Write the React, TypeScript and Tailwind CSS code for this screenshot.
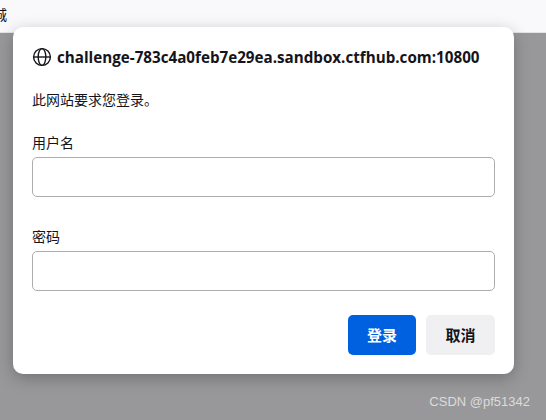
import React from 'react';

const cjk = { fontFamily: '"Open Sans", "Noto Sans CJK SC", sans-serif' };

const GlobeIcon = () => (
  <svg width="20" height="20" viewBox="0 0 20 20" fill="none" stroke="#15141a" strokeWidth="1.4">
    <circle cx="10" cy="10" r="8.4" />
    <ellipse cx="10" cy="10" rx="3.8" ry="8.4" />
    <path d="M1.6 10h16.8" />
  </svg>
);

const Field = ({ label }: { label: string }) => (
  <div className="flex flex-col">
    <label className="text-[14px] leading-[20px] text-[#15141a] mb-[4px]">{label}</label>
    <input
      type="text"
      className="w-full h-[40px] rounded-[5px] border border-[#adadaf] bg-white outline-none"
    />
  </div>
);

export default function App() {
  return (
    <div className="relative w-[546px] h-[420px] overflow-hidden bg-[#98989a]" style={cjk}>
      {/* Tab bar behind the dialog */}
      <div className="h-[33px] bg-[#f9f9fb] border-b border-[#e4e4e6] text-[14px] leading-[30px] text-[#15141a] -ml-[7px]">
        城
      </div>

      {/* Dialog */}
      <div className="absolute left-[13px] top-[27px] w-[501px] h-[347px] bg-white rounded-[10px] shadow-[0_4px_16px_rgba(0,0,0,0.25)] px-[19px] pt-[20px] pb-[19px] flex flex-col">
        <div className="flex items-center gap-[5px] h-[20px]">
          <GlobeIcon />
          <span className="text-[15.2px] font-bold leading-[20px] text-[#15141a] whitespace-nowrap">
            challenge-783c4a0feb7e29ea.sandbox.ctfhub.com:10800
          </span>
        </div>
        <p className="mt-[23px] text-[14px] leading-[20px] text-[#15141a]">此网站要求您登录。</p>
        <div className="mt-[23px] flex flex-col gap-[30px]">
          <Field label="用户名" />
          <Field label="密码" />
        </div>
        <div className="mt-auto flex justify-end gap-[10px]">
          <button className="w-[68px] h-[40px] rounded-[5px] bg-[#0061e0] text-white text-[15px] font-bold">登录</button>
          <button className="w-[69px] h-[40px] rounded-[5px] bg-[#f0f0f2] text-[#15141a] text-[15px] font-bold">取消</button>
        </div>
      </div>

      {/* Watermark */}
      <span
        className="absolute right-[16px] top-[394px] text-[13px] leading-[16px] text-[#dcdcdc]"
        style={{ fontFamily: '"Liberation Sans", sans-serif' }}
      >
        CSDN @pf51342
      </span>
    </div>
  );
}
